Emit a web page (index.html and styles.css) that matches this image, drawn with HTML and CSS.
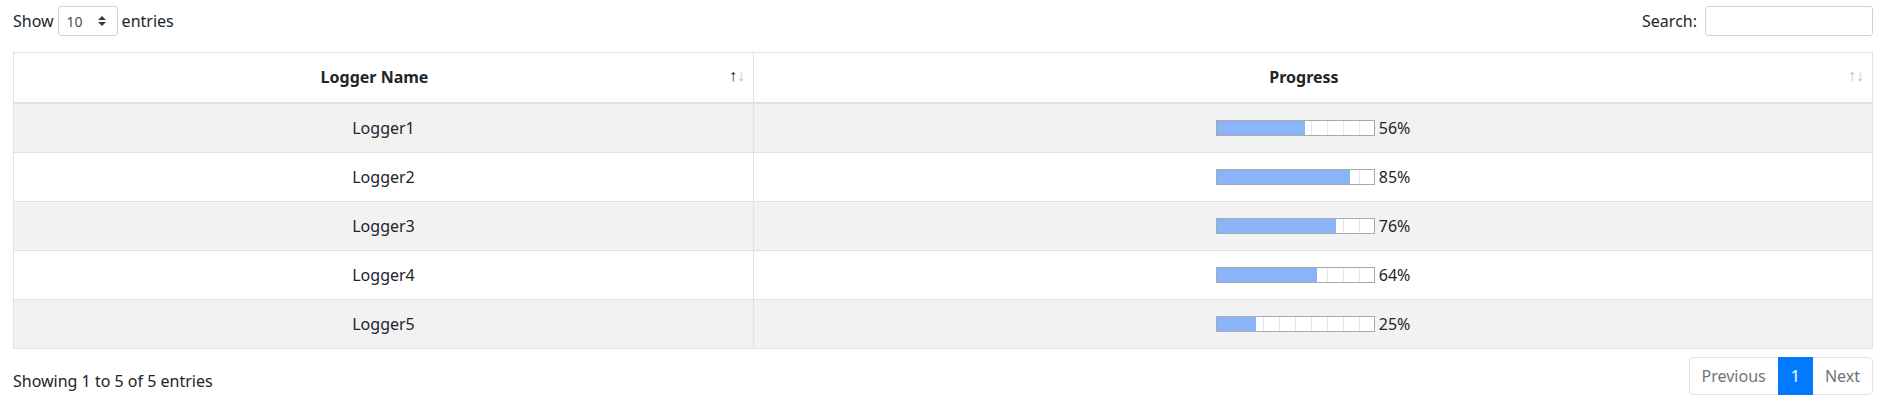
FILE: index.html
```html
<!DOCTYPE html>
<html lang="en">
<head>
    <meta charset="UTF-8">
    <meta name="viewport" content="width=device-width, initial-scale=1.0">
    <title>Logger Progress</title>
    <link rel="stylesheet" href="styles.css">
</head>
<body>

    <div class="dt-wrapper">
        <div class="dt-top">
            <label class="dt-length">Show
                <span class="select-wrap">
                    <select class="select-sm">
                        <option>10</option>
                        <option>25</option>
                        <option>50</option>
                        <option>100</option>
                    </select>
                    <svg class="select-arrow" viewBox="0 0 4 5" width="8" height="10"><path d="M2 0L0 2h4zm0 5L0 3h4z" fill="#343a40"/></svg>
                </span>
                entries</label>
            <label class="dt-search">Search:<input type="search" class="input-sm"></label>
        </div>

        <table class="dt-table">
            <colgroup>
                <col class="col-name">
                <col>
            </colgroup>
            <thead>
                <tr>
                    <th class="sorting sorting-asc">Logger Name</th>
                    <th class="sorting">Progress</th>
                </tr>
            </thead>
            <tbody>
                <tr>
                    <td>Logger1</td>
                    <td><span class="bar"><span class="fill" style="width: 56%"></span></span> 56%</td>
                </tr>
                <tr>
                    <td>Logger2</td>
                    <td><span class="bar"><span class="fill" style="width: 85%"></span></span> 85%</td>
                </tr>
                <tr>
                    <td>Logger3</td>
                    <td><span class="bar"><span class="fill" style="width: 76%"></span></span> 76%</td>
                </tr>
                <tr>
                    <td>Logger4</td>
                    <td><span class="bar"><span class="fill" style="width: 64%"></span></span> 64%</td>
                </tr>
                <tr>
                    <td>Logger5</td>
                    <td><span class="bar"><span class="fill" style="width: 25%"></span></span> 25%</td>
                </tr>
            </tbody>
        </table>

        <div class="dt-bottom">
            <div class="dt-info">Showing 1 to 5 of 5 entries</div>
            <ul class="pagination">
                <li class="page-item disabled"><span class="page-link">Previous</span></li>
                <li class="page-item active"><span class="page-link">1</span></li>
                <li class="page-item disabled"><span class="page-link">Next</span></li>
            </ul>
        </div>
    </div>

</body>
</html>
```

FILE: styles.css
```css
body {
    margin: 0;
    font-family: "Segoe UI", "Noto Sans", sans-serif;
    font-size: 16px;
    line-height: 1.5;
    color: #212529;
    background: #fff;
}
.dt-wrapper {
    padding: 6px 14px 0 13px;
}
.dt-top {
    display: flex;
    justify-content: space-between;
    align-items: center;
    height: 30px;
}
label {
    display: flex;
    align-items: center;
    white-space: nowrap;
    margin: 0;
}
.select-wrap {
    position: relative;
    display: inline-block;
    margin: 0 4px;
}
.select-sm {
    -webkit-appearance: none;
    appearance: none;
    width: 60px;
    height: 30px;
    padding: 0 24px 0 8px;
    font-family: inherit;
    font-size: 14px;
    color: #495057;
    background: #fff;
    border: 1px solid #ced4da;
    border-radius: 3px;
}
.select-arrow {
    position: absolute;
    right: 12px;
    top: 10px;
    pointer-events: none;
}
.input-sm {
    width: 168px;
    height: 30px;
    box-sizing: border-box;
    margin-left: 8px;
    padding: 4px 8px;
    font-family: inherit;
    font-size: 14px;
    border: 1px solid #ced4da;
    border-radius: 3px;
}
.dt-table {
    width: 100%;
    margin-top: 16px;
    border-collapse: collapse;
    table-layout: fixed;
}
.col-name {
    width: 740px;
}
.dt-table th,
.dt-table td {
    padding: 12px;
    text-align: center;
    border: 1px solid #dee2e6;
}
.dt-table th {
    position: relative;
    font-weight: 700;
    padding-bottom: 13px;
    border-bottom-width: 2px;
}
.dt-table th.sorting {
    padding-right: 30px;
}
.sorting:before,
.sorting:after {
    position: absolute;
    bottom: 0.9em;
    display: block;
    opacity: 0.3;
    font-family: "Liberation Sans", sans-serif;
    font-weight: 400;
}
.sorting:before {
    right: 1em;
    content: "\2191";
}
.sorting:after {
    right: 0.5em;
    content: "\2193";
}
.sorting-asc:before {
    opacity: 1;
}
.dt-table tbody tr:nth-child(odd) {
    background-color: #f2f2f2;
}
.bar {
    display: inline-block;
    vertical-align: middle;
    width: 157px;
    height: 14px;
    border: 1px solid #a9a9a9;
    background: #fff repeating-linear-gradient(to right, transparent 0 14px, #e6e6e6 14px 15px, transparent 15px 16px);
    text-align: left;
    margin-top: -3px;
}
.fill {
    display: block;
    height: 100%;
    background: #8ab4f8;
}
.dt-bottom {
    display: flex;
    justify-content: space-between;
    align-items: flex-start;
    margin-top: 6px;
}
.dt-info {
    padding-top: 0.85em;
}
.pagination {
    display: flex;
    list-style: none;
    margin: 2px 0;
    padding: 0;
}
.page-link {
    display: block;
    padding: 8px 12px;
    line-height: 1.25;
    color: #6c757d;
    background: #fff;
    border: 1px solid #dee2e6;
    margin-left: -1px;
}
.page-item:first-child .page-link {
    margin-left: 0;
    border-radius: 4px 0 0 4px;
}
.page-item:last-child .page-link {
    border-radius: 0 4px 4px 0;
}
.page-item.active .page-link {
    color: #fff;
    background: #007bff;
    border-color: #007bff;
    position: relative;
    z-index: 1;
}
```
